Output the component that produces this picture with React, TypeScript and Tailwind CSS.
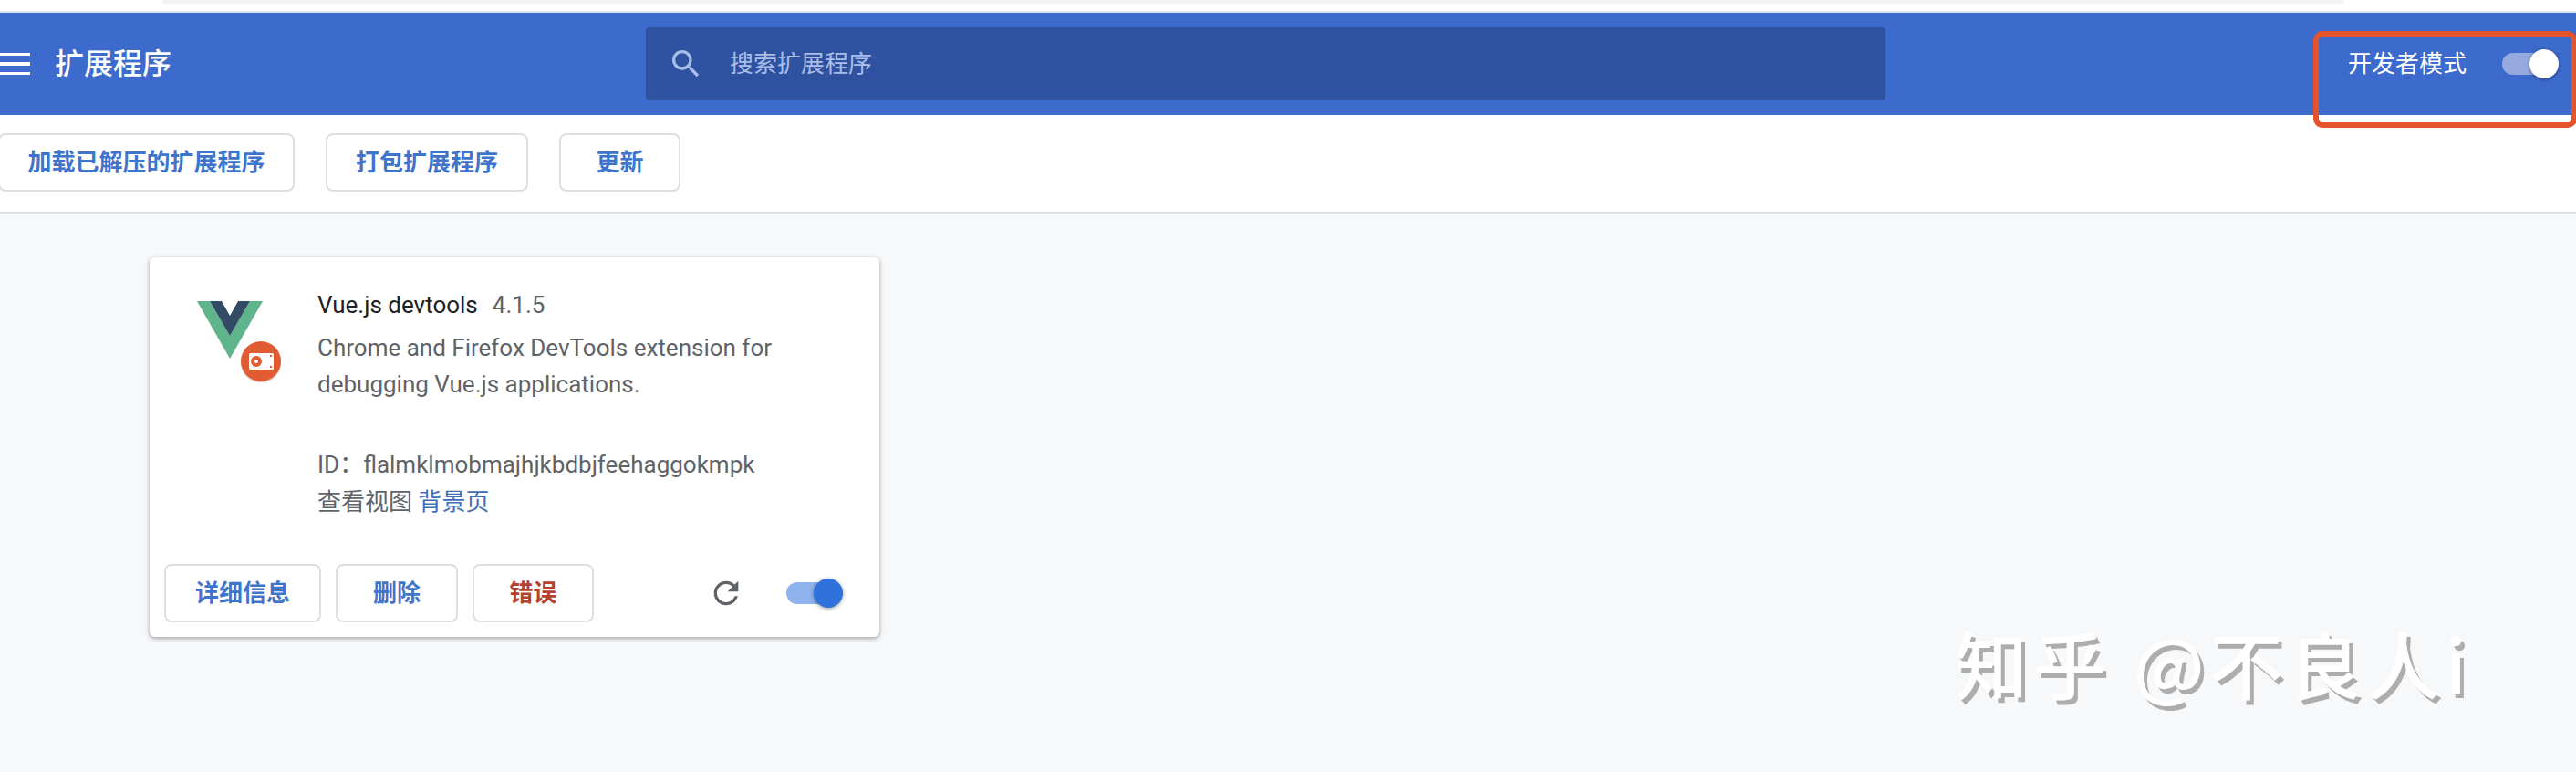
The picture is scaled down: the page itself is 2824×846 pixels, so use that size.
const FONT = "font-['Roboto','Noto_Sans_CJK_SC',sans-serif]";

function Toggle({ track, knob }: { track: string; knob: string }) {
  return (
    <div className={`relative h-[24px] w-[58px] rounded-full ${track}`}>
      <div
        className={`absolute right-[-4px] top-[-4px] h-[32px] w-[32px] rounded-full shadow-[0_1px_4px_rgba(0,0,0,0.4)] ${knob}`}
      />
    </div>
  );
}

function OutlineButton({
  label,
  width,
  danger,
}: {
  label: string;
  width: string;
  danger?: boolean;
}) {
  return (
    <button
      className={`flex h-[64px] items-center justify-center rounded-[8px] border-2 border-[#dcdee0] bg-white text-[26px] font-semibold ${width} ${
        danger ? "text-[#b5412e]" : "text-[#3f74cc]"
      }`}
    >
      {label}
    </button>
  );
}

function VueIcon() {
  return (
    <svg width="96" height="92" viewBox="0 0 96 92" className="block">
      <path d="M0 0H14L36 38L58 0H72L36 63Z" fill="#5fb48b" />
      <path d="M14 0H27L36 16L45 0H58L36 38Z" fill="#344b66" />
      <circle cx="70" cy="67.5" r="22" fill="#c9a595" opacity="0.45" />
      <circle cx="70" cy="66" r="22" fill="#e25c33" />
      <rect x="57" y="57" width="27" height="18" rx="1.5" fill="#fff" />
      <circle cx="65" cy="66" r="6" fill="#e25c33" />
      <circle cx="65" cy="66" r="2" fill="#fff" />
      <circle cx="81" cy="60" r="1.2" fill="#e25c33" />
      <circle cx="81" cy="72" r="1.2" fill="#e25c33" />
    </svg>
  );
}

export default function App() {
  return (
    <div className={`relative h-[846px] w-[2824px] overflow-hidden bg-[#f7f8fa] ${FONT}`}>
      {/* browser chrome left at the top of the crop */}
      <div className="h-[12px] bg-white">
        <div className="ml-[178px] h-[4px] w-[2392px] rounded-b-[8px] bg-[#f1f3f4]" />
      </div>
      <div className="h-[2px] bg-[#d6e3f0]" />

      <header className="flex h-[112px] items-center bg-[#3d6acd] text-white">
        <div className="flex w-[708px] shrink-0 items-center">
          <div className="flex w-[33px] flex-col gap-[7px]">
            <div className="h-[3.5px] bg-white" />
            <div className="h-[3.5px] bg-white" />
            <div className="h-[3.5px] bg-white" />
          </div>
          <h1 className="ml-[27px] text-[32px] font-medium">扩展程序</h1>
        </div>
        <div className="flex h-[80px] w-[1359px] shrink-0 items-center rounded-[4px] bg-[#2f52a0] pl-[24px] text-[#aabde8]">
          <svg width="40" height="40" viewBox="0 0 24 24" fill="currentColor">
            <path d="M15.5 14h-.79l-.28-.27C15.41 12.59 16 11.11 16 9.5 16 5.91 13.09 3 9.5 3S3 5.91 3 9.5 5.91 16 9.5 16c1.61 0 3.09-.59 4.23-1.57l.27.28v.79l5 4.99L20.49 19l-4.99-5zm-6 0C7.01 14 5 11.99 5 9.5S7.01 5 9.5 5 14 7.01 14 9.5 11.99 14 9.5 14z" />
          </svg>
          <span className="ml-[28px] text-[26px]">搜索扩展程序</span>
        </div>
        <div className="ml-[507px] flex items-center text-[26px]">
          <span>开发者模式</span>
          <div className="ml-[39px]">
            <Toggle track="bg-[#96aadf]" knob="bg-white" />
          </div>
        </div>
      </header>

      <div className="flex h-[108px] items-start gap-[34px] border-b-2 border-[#dedfe1] bg-white pt-[20px]">
        <div className="-ml-[2px]">
          <OutlineButton label="加载已解压的扩展程序" width="w-[325px]" />
        </div>
        <OutlineButton label="打包扩展程序" width="w-[222px]" />
        <OutlineButton label="更新" width="w-[133px]" />
      </div>

      <main className="pl-[164px] pt-[48px]">
        <section className="flex h-[416px] w-[800px] flex-col justify-between rounded-[6px] bg-white pb-[16px] pl-[16px] pr-[37px] pt-[32px] shadow-[0_2px_4px_rgba(60,64,67,0.35),0_1px_6px_rgba(60,64,67,0.15)]">
          <div className="flex items-start">
            <div className="ml-[36px] mt-[16px] w-[132px] shrink-0">
              <VueIcon />
            </div>
            <div className="text-[26px] leading-[40px] text-[#5f6368]">
              <div>
                <span className="text-[#202124]">Vue.js devtools</span>
                <span className="ml-[16px]">4.1.5</span>
              </div>
              <div className="mt-[7px] w-[520px]">
                Chrome and Firefox DevTools extension for debugging Vue.js applications.
              </div>
              <div className="mt-[48px]">ID：flalmklmobmajhjkbdbjfeehaggokmpk</div>
              <div className="mt-[1px]">
                查看视图 <span className="text-[#3f6cbb]">背景页</span>
              </div>
            </div>
          </div>

          <div className="flex items-center">
            <div className="flex gap-[16px]">
              <OutlineButton label="详细信息" width="w-[172px]" />
              <OutlineButton label="删除" width="w-[134px]" />
              <OutlineButton label="错误" width="w-[133px]" danger />
            </div>
            <svg
              width="40"
              height="40"
              viewBox="0 0 24 24"
              fill="#5f6368"
              className="ml-[125px]"
            >
              <path d="M17.65 6.35C16.2 4.9 14.21 4 12 4c-4.42 0-7.99 3.58-7.99 8s3.57 8 7.99 8c3.73 0 6.84-2.55 7.73-6h-2.08c-.82 2.33-3.04 4-5.65 4-3.31 0-6-2.69-6-6s2.69-6 6-6c1.66 0 3.14.69 4.22 1.78L13 11h7V4l-2.35 2.35z" />
            </svg>
            <div className="ml-[46px]">
              <Toggle track="bg-[#8fb3ec]" knob="bg-[#2f72dc]" />
            </div>
          </div>
        </section>
      </main>

      {/* red annotation drawn over the screenshot */}
      <div className="absolute left-[2536px] top-[34px] h-[106px] w-[289px] rounded-[10px] border-[6px] border-[#e5532d]" />

      {/* zhihu watermark */}
      <div className="absolute left-[2143px] top-[670px] whitespace-nowrap font-['Noto_Sans_CJK_SC',sans-serif] text-[80px] font-medium leading-[110px] tracking-[6px] text-white [text-shadow:4px_5px_0_#adadad]">
        知乎 @不良人i
      </div>
    </div>
  );
}
